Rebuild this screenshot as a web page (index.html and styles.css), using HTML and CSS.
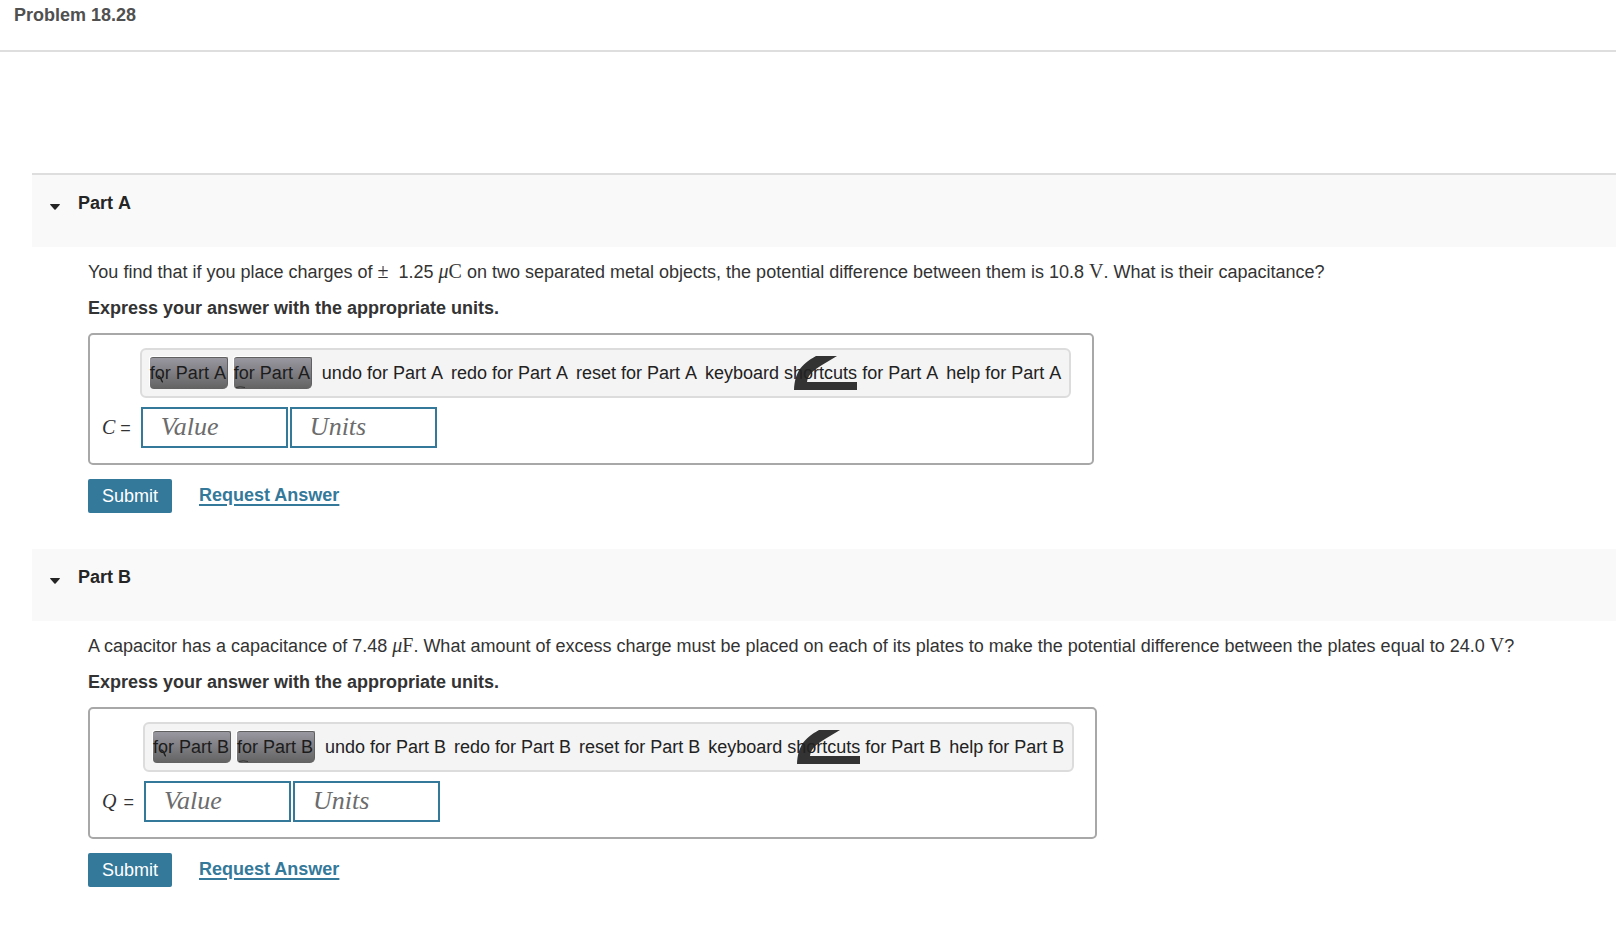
FILE: index.html
```html
<!DOCTYPE html>
<html lang="en">
<head>
<meta charset="utf-8">
<title>Problem 18.28</title>
<link rel="stylesheet" href="styles.css">
</head>
<body>
<header class="page-header"><h1 class="page-title">Problem 18.28</h1></header>
<main class="parts">
  <section class="part">
    <button class="part-header" type="button" aria-expanded="true">
      <svg class="caret" width="10" height="6" viewBox="0 0 10 6" aria-hidden="true"><path d="M0 0.5Q0 0 .6 0H9.4Q10 0 10 .5L5.6 5.4Q5 6 4.400 5.400Z" fill="#252525"/></svg>
      <span>Part A</span>
    </button>
    <form class="part-body">
      <p class="question">You find that if you place charges of <span class="math">±</span>&nbsp; 1.25 <span class="math"><i>μ</i>C</span> on two separated metal objects, the potential difference between them is 10.8 <span class="math">V</span>. What is their capacitance?</p>
      <p class="instruction">Express your answer with the appropriate units.</p>
      <div class="answer-box">
        <div class="toolbar" role="toolbar" aria-label="Part A tools">
          <button class="tool tool-template" type="button">for Part A<svg class="tool-mark" width="78" height="32" viewBox="0 0 78 32" aria-hidden="true"><path d="M8 18Q10 18 11 21Q12 24 13 24" fill="none" stroke="#222" stroke-width="1.500"/></svg></button>
          <button class="tool tool-template" type="button">for Part A<svg class="tool-mark" width="78" height="32" viewBox="0 0 78 32" aria-hidden="true"><path d="M2 29.500Q6 28 11 29.500" fill="none" stroke="#333" stroke-width="1"/></svg></button>
          <button class="tool tool-undo" type="button">undo for Part A</button>
          <button class="tool" type="button">redo for Part A</button>
          <button class="tool" type="button">reset for Part A</button>
          <button class="tool tool-keyboard" type="button"><svg class="keyboard-mark" width="63" height="34" viewBox="0 0 63 34" aria-hidden="true"><path d="M0 34C1 17 6 9 22 0H43L28 9C18 15 14 19 13 26H63V34Z" fill="#333"/></svg><span class="tool-label">keyboard shortcuts for Part A</span></button>
          <button class="tool" type="button">help for Part A</button>
        </div>
        <label class="variable" for="value-a"><i class="math">C</i> =</label>
        <div class="fields">
          <input class="field" id="value-a" type="text" placeholder="Value">
          <input class="field" type="text" placeholder="Units" aria-label="Units for Part A">
        </div>
      </div>
      <div class="actions">
        <button class="submit" type="button">Submit</button>
        <a class="request" href="#">Request Answer</a>
      </div>
    </form>
  </section>
  <section class="part">
    <button class="part-header" type="button" aria-expanded="true">
      <svg class="caret" width="10" height="6" viewBox="0 0 10 6" aria-hidden="true"><path d="M0 0.5Q0 0 .6 0H9.4Q10 0 10 .5L5.6 5.4Q5 6 4.400 5.400Z" fill="#252525"/></svg>
      <span>Part B</span>
    </button>
    <form class="part-body">
      <p class="question">A capacitor has a capacitance of 7.48 <span class="math"><i>μ</i>F</span>. What amount of excess charge must be placed on each of its plates to make the potential difference between the plates equal to 24.0 <span class="math">V</span>?</p>
      <p class="instruction">Express your answer with the appropriate units.</p>
      <div class="answer-box">
        <div class="toolbar" role="toolbar" aria-label="Part B tools">
          <button class="tool tool-template" type="button">for Part B<svg class="tool-mark" width="78" height="32" viewBox="0 0 78 32" aria-hidden="true"><path d="M8 18Q10 18 11 21Q12 24 13 24" fill="none" stroke="#222" stroke-width="1.500"/></svg></button>
          <button class="tool tool-template" type="button">for Part B<svg class="tool-mark" width="78" height="32" viewBox="0 0 78 32" aria-hidden="true"><path d="M2 29.500Q6 28 11 29.500" fill="none" stroke="#333" stroke-width="1"/></svg></button>
          <button class="tool tool-undo" type="button">undo for Part B</button>
          <button class="tool" type="button">redo for Part B</button>
          <button class="tool" type="button">reset for Part B</button>
          <button class="tool tool-keyboard" type="button"><svg class="keyboard-mark" width="63" height="34" viewBox="0 0 63 34" aria-hidden="true"><path d="M0 34C1 17 6 9 22 0H43L28 9C18 15 14 19 13 26H63V34Z" fill="#333"/></svg><span class="tool-label">keyboard shortcuts for Part B</span></button>
          <button class="tool" type="button">help for Part B</button>
        </div>
        <label class="variable variable-wide" for="value-b"><i class="math">Q</i> =</label>
        <div class="fields">
          <input class="field" id="value-b" type="text" placeholder="Value">
          <input class="field" type="text" placeholder="Units" aria-label="Units for Part B">
        </div>
      </div>
      <div class="actions">
        <button class="submit" type="button">Submit</button>
        <a class="request" href="#">Request Answer</a>
      </div>
    </form>
  </section>
</main>
</body>
</html>
```
FILE: styles.css
```css
* { box-sizing: border-box; }
body {
  margin: 0;
  background: #fff;
  color: #333;
  font: 18px/24px "Liberation Sans", Arial, sans-serif;
}
button, input { font: inherit; }
.page-header {
  padding: 3px 14px 23px;
  border-bottom: 2px solid #dedede;
}
.page-title {
  margin: 0;
  color: #505050;
  font-size: 18px;
  line-height: 24px;
}
.parts { margin: 121px 0 0 32px; border-top: 2px solid #dedede; }
.part-header {
  display: flex;
  align-items: center;
  gap: 18px;
  width: 100%;
  height: 72px;
  padding: 0 18px 16px;
  border: 0;
  background: #f9f9f9;
  color: #252525;
  font-weight: bold;
  font-kerning: none;
  text-align: left;
}
.caret { margin-top: 7px; }
.part-body { padding: 13px 16px 36px 56px; }
.question, .instruction { margin: 0 0 12px; }
.instruction { font-weight: bold; margin-bottom: 13px; }
.math { font-family: "Liberation Serif", "Times New Roman", serif; font-size: 20px; line-height: 20px; }
.answer-box {
  display: inline-grid;
  grid-template-columns: auto auto;
  column-gap: 9px;
  row-gap: 9px;
  padding: 13px 21px 15px 12px;
  border: 2px solid #a8a8a8;
  border-radius: 5px;
  vertical-align: top;
}
.toolbar {
  grid-column: 2;
  display: flex;
  align-items: center;
  gap: 8px;
  height: 50px;
  padding: 0 8px;
  border: 2px solid #dcdcdc;
  border-radius: 6px;
  background: #f4f4f4;
  font-kerning: none;
}
.tool {
  position: relative;
  padding: 0;
  border: 0;
  background: none;
  color: #222;
  font-kerning: none;
  white-space: nowrap;
}
.tool-template {
  width: 78px;
  height: 32px;
  margin-right: -2px;
  padding-bottom: 1px;
  border-top: 1px solid #606060;
  border-right: 1px solid #606060;
  border-radius: 3px 2px 5px 4px;
  background: linear-gradient(#9997a0, #626262);
  box-shadow: -1px -1px 0 #fff;
  text-align: left;
  color: #1c1c1c;
}
.tool-mark { position: absolute; left: 0; top: 0; }
.tool-undo { margin-left: 4px; }
.keyboard-mark { position: absolute; left: 89px; top: -5px; }
.tool-label { position: relative; }
.variable { align-self: center; white-space: nowrap; }
.variable-wide .math { margin-right: 2px; }
.fields { display: flex; gap: 2px; padding-left: 1px; }
.field {
  width: 147px;
  height: 41px;
  padding: 0 18px 2px;
  border: 2px solid #34799a;
  border-radius: 0;
  background: #fff;
  color: #333;
  font: italic 26px/34px "Liberation Serif", "Times New Roman", serif;
}
.field::placeholder { color: #6c6c6c; opacity: 1; }
.actions { display: flex; align-items: center; gap: 27px; margin-top: 14px; }
.submit {
  width: 84px;
  height: 34px;
  padding: 0;
  border: 0;
  border-radius: 2px;
  background: #34799a;
  color: #fff;
}
.request {
  padding-bottom: 2px;
  color: #34799a;
  font-weight: bold;
  text-decoration-thickness: 2px;
  text-underline-offset: 3px;
}
```
